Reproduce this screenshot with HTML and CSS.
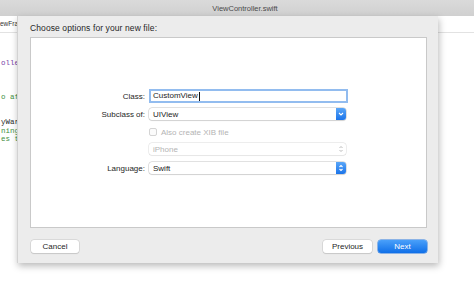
FILE: index.html
```html
<!DOCTYPE html>
<html lang="en">
<head>
  <meta charset="UTF-8">
  <title>ViewController.swift</title>
  <link rel="stylesheet" href="styles.css">
</head>
<body>
  <div class="window">
    <div class="titlebar">ViewController.swift</div>
    <div class="jumpbar">ewFrame</div>
    <div class="editor">
      <div class="code-line">&nbsp;</div>
      <div class="code-line">&nbsp;</div>
      <div class="code-line">&nbsp;</div>
      <div class="code-line purple">olle</div>
      <div class="code-line">&nbsp;</div>
      <div class="code-line">&nbsp;</div>
      <div class="code-line">&nbsp;</div>
      <div class="code-line green">o af</div>
      <div class="code-line">&nbsp;</div>
      <div class="code-line">&nbsp;</div>
      <div class="code-line">yWar</div>
      <div class="code-line green">ning</div>
      <div class="code-line green">es t</div>
    </div>

    <!-- sheet lies over the editor -->
    <div class="sheet">
      <div class="sheet-title">Choose options for your new file:</div>
      <div class="sheet-body">
        <div class="form">
          <div class="form-row row-class">
            <label class="form-label">Class:</label>
            <div class="text-field"><span>CustomView</span><span class="caret"></span></div>
          </div>
          <div class="form-row row-subclass">
            <label class="form-label">Subclass of:</label>
            <div class="popup">
              <span class="popup-value">UIView</span>
              <span class="popup-arrow">
                <svg viewBox="0 0 10 12"><path d="M3 5l2 2 2-2" /></svg>
              </span>
            </div>
          </div>
          <div class="form-row row-check">
            <span class="form-label"></span>
            <div class="checkbox-wrap">
              <span class="checkbox"></span>
              <span class="checkbox-text">Also create XIB file</span>
            </div>
          </div>
          <div class="form-row row-device">
            <span class="form-label"></span>
            <div class="popup disabled">
              <span class="popup-value">iPhone</span>
              <span class="popup-arrow">
                <svg viewBox="0 0 10 12"><path d="M3.5 5l1.5-1.5 1.5 1.5M3.5 7l1.5 1.5 1.5-1.5" /></svg>
              </span>
            </div>
          </div>
          <div class="form-row row-language">
            <label class="form-label">Language:</label>
            <div class="popup">
              <span class="popup-value">Swift</span>
              <span class="popup-arrow">
                <svg viewBox="0 0 10 12"><path d="M3.5 5l1.5-1.5 1.5 1.5M3.5 7l1.5 1.5 1.5-1.5" /></svg>
              </span>
            </div>
          </div>
        </div>
      </div>
      <div class="sheet-footer">
        <button class="btn btn-cancel">Cancel</button>
        <div class="footer-right">
          <button class="btn">Previous</button>
          <button class="btn btn-primary">Next</button>
        </div>
      </div>
    </div>
  </div>
</body>
</html>
```

FILE: styles.css
```css
* {
  margin: 0;
  padding: 0;
  box-sizing: border-box;
}

body {
  font-family: "Liberation Sans", Arial, sans-serif;
  background-color: #ffffff;
  color: #222222;
  width: 474px;
  height: 288px;
  overflow: hidden;
}

.window {
  position: relative;
  width: 474px;
  height: 288px;
}

.titlebar {
  height: 16px;
  background: linear-gradient(#dadada, #d0d0d0);
  color: #4a4a4a;
  font-size: 7.5px;
  line-height: 17px;
  text-align: center;
  padding-left: 16px;
}

.jumpbar {
  height: 17px;
  border-bottom: 1px solid #e2e2e2;
  font-size: 6.5px;
  line-height: 16px;
  color: #333333;
  white-space: nowrap;
  overflow: hidden;
}

.editor {
  font-family: "Liberation Mono", "DejaVu Sans Mono", monospace;
  font-size: 7.5px;
  color: #2a2a2a;
  padding-left: 1px;
}

.code-line {
  height: 8.5px;
  line-height: 8.5px;
  white-space: pre;
}

.code-line.purple {
  color: #7b45a8;
}

.code-line.green {
  color: #3f8f3f;
}

.sheet {
  position: absolute;
  left: 17px;
  top: 16px;
  width: 421px;
  height: 247px;
  background-color: #ececec;
  border-left: 1px solid #d2d2d2;
  box-shadow: 1px 3px 7px rgba(0, 0, 0, 0.28);
  padding: 0 11px 0 12px;
  display: flex;
  flex-direction: column;
}

.sheet-title {
  height: 21px;
  padding-top: 4px;
  font-size: 8.5px;
  line-height: 16px;
  color: #262626;
  letter-spacing: 0.1px;
}

.sheet-body {
  height: 191px;
  background-color: #ffffff;
  border: 1px solid #c9c9c9;
  padding-top: 51px;
}

.form {
  display: flex;
  flex-direction: column;
}

.form-row {
  display: flex;
  align-items: center;
}

.form-label {
  flex-shrink: 0;
  width: 118px;
  text-align: right;
  font-size: 8px;
  color: #262626;
  padding-right: 4px;
}

.row-class {
  height: 14px;
}

.row-subclass {
  height: 12px;
  margin-top: 5px;
}

.row-check {
  height: 14px;
  margin-top: 5px;
}

.row-device {
  height: 12px;
  margin-top: 4px;
}

.row-language {
  height: 12px;
  margin-top: 7px;
}

.text-field {
  width: 199px;
  height: 14px;
  border: 2px solid #92bcef;
  background-color: #ffffff;
  font-size: 8px;
  line-height: 10px;
  padding-left: 2px;
  display: flex;
  align-items: center;
  color: #1c1c1c;
}

.caret {
  width: 1px;
  height: 9px;
  background-color: #111111;
  margin-left: 1px;
}

.popup {
  width: 197px;
  height: 12px;
  background-color: #ffffff;
  border-radius: 3px;
  box-shadow: 0 0 0 0.5px #c4c4c4, 0 1px 1px rgba(0, 0, 0, 0.12);
  display: flex;
  align-items: center;
  justify-content: space-between;
  font-size: 8px;
  color: #1c1c1c;
}

.popup-value {
  padding-left: 4px;
}

.popup-arrow {
  width: 10px;
  height: 12px;
  border-radius: 0 3px 3px 0;
  background: linear-gradient(#5aa6f8, #1b74ea);
}

.popup-arrow svg {
  width: 10px;
  height: 12px;
  display: block;
  fill: none;
  stroke: #ffffff;
  stroke-width: 1.1;
}

.popup.disabled {
  color: #b4b4b4;
  box-shadow: 0 0 0 0.5px #dcdcdc, 0 1px 1px rgba(0, 0, 0, 0.06);
}

.popup.disabled .popup-arrow {
  background: none;
}

.popup.disabled .popup-arrow svg {
  stroke: #a8a8a8;
  stroke-width: 0.8;
}

.checkbox-wrap {
  display: flex;
  align-items: center;
}

.checkbox {
  width: 8px;
  height: 8px;
  border: 1px solid #d4d4d4;
  border-radius: 2px;
  background-color: #fbfbfb;
  margin-right: 4px;
}

.checkbox-text {
  font-size: 8px;
  color: #b4b4b4;
}

.sheet-footer {
  margin-top: 12px;
  display: flex;
  justify-content: space-between;
  align-items: center;
  padding-left: 1px;
}

.footer-right {
  display: flex;
  gap: 6px;
}

.btn {
  width: 49px;
  height: 13px;
  font-family: "Liberation Sans", Arial, sans-serif;
  font-size: 8px;
  color: #262626;
  background-color: #ffffff;
  border: none;
  border-radius: 3px;
  box-shadow: 0 0 0 0.5px #c6c6c6, 0 1px 1px rgba(0, 0, 0, 0.14);
}

.btn-cancel {
  width: 48px;
}

.btn-primary {
  color: #ffffff;
  background: linear-gradient(#4aa0fa, #0f6fe8);
  box-shadow: 0 0 0 0.5px #2a7be0;
}
```
